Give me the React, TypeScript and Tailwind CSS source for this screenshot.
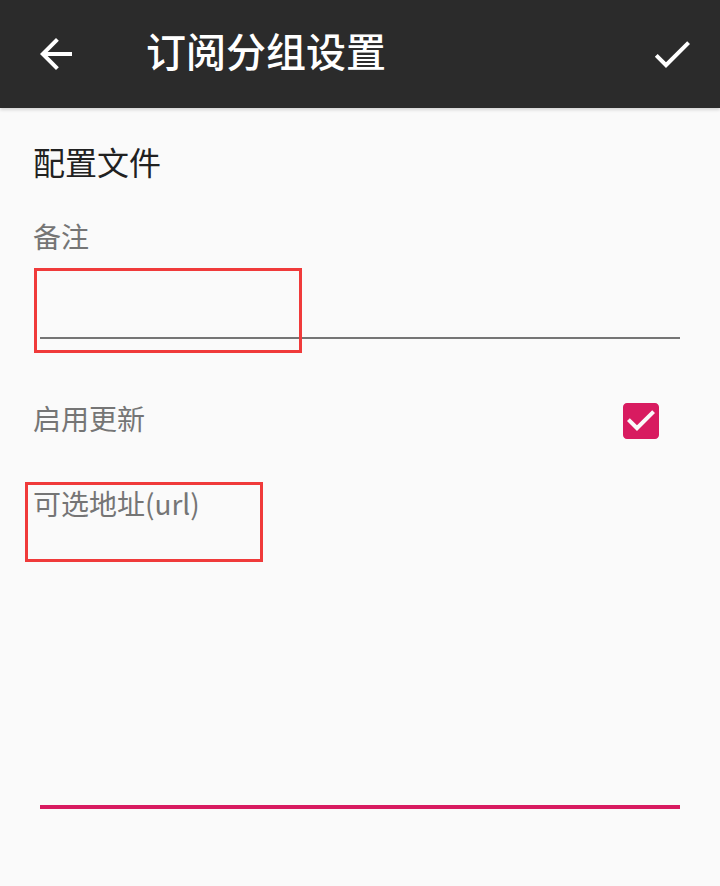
import React from 'react';

const font = { fontFamily: "Roboto, 'Noto Sans CJK SC', sans-serif" };
const cjk = { fontFamily: "'Noto Sans CJK SC', Roboto, sans-serif" };

export default function App() {
  return (
    <div className="w-[720px] h-[886px] bg-[#fafafa] flex flex-col" style={font}>
      <header className="h-[108px] bg-[#2b2b2b] flex items-center shrink-0 shadow-[0_2px_3px_rgba(0,0,0,0.15)]">
        <button className="ml-[32px] w-[48px] h-[48px] text-white">
          <svg viewBox="0 0 24 24" width="48" height="48" fill="currentColor">
            <path d="M20 11H7.83l5.59-5.59L12 4l-8 8 8 8 1.41-1.41L7.83 13H20v-2z" />
          </svg>
        </button>
        <h1 className="ml-[66px] text-[40px] leading-none font-medium text-white flex-1">订阅分组设置</h1>
        <button className="mr-[24px] w-[48px] h-[48px] text-white">
          <svg viewBox="0 0 24 24" width="48" height="48" fill="currentColor">
            <path d="M9 16.17L4.83 12l-1.42 1.41L9 19 21 7l-1.41-1.41z" />
          </svg>
        </button>
      </header>

      <div className="flex flex-col px-[40px]">
        <h2 className="mt-[40px] -ml-[7px] text-[32px] leading-none text-[#212121]">配置文件</h2>

        <div className="relative mt-[45px]">
          <label className="block -ml-[7px] text-[28px] leading-none text-[#757575]">备注</label>
          <input className="block w-full h-[86px] bg-transparent outline-none border-b-2 border-[#757575]" />
          <div className="absolute left-[-6px] top-[43px] w-[268px] h-[85px] border-[3px] border-[#f03a3a]" />
        </div>

        <div className="mt-[58px] flex items-center justify-between">
          <span className="-ml-[7px] text-[28px] leading-none text-[#757575]">启用更新</span>
          <svg className="mr-[15px]" viewBox="0 0 24 24" width="48" height="48" fill="#d81b60">
            <path d="M19 3H5c-1.11 0-2 .9-2 2v14c0 1.1.89 2 2 2h14c1.11 0 2-.9 2-2V5c0-1.1-.89-2-2-2zm-9 14l-5-5 1.41-1.41L10 14.17l7.59-7.59L19 8l-9 9z" />
          </svg>
        </div>

        <div className="relative mt-[44px]">
          <div className="-ml-[7px] text-[28px] leading-none text-[#757575]" style={cjk}>可选地址(url)</div>
          <textarea className="block w-full h-[292px] bg-transparent outline-none resize-none border-b-4 border-[#d81b60]" />
          <div className="absolute left-[-15px] top-[-7px] w-[238px] h-[80px] border-[3px] border-[#f03a3a]" />
        </div>
      </div>
    </div>
  );
}
